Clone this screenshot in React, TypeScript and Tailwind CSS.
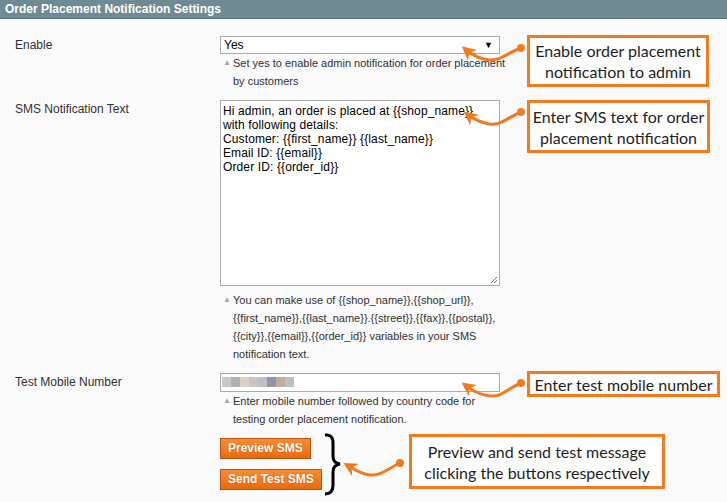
import React from "react";

const arial = { fontFamily: '"Liberation Sans", Arial, sans-serif' };

function Note({ lines }: { lines: React.ReactNode[] }) {
  return (
    <div className="flex text-[11px] leading-[18px] text-[#303030] whitespace-nowrap">
      <span className="w-[13px] shrink-0 pl-[3px] text-[8px] text-[#a0a8ae]">▲</span>
      <div>
        {lines.map((l, i) => (
          <div key={i}>{l}</div>
        ))}
      </div>
    </div>
  );
}

function Callout({ className, children }: { className: string; children: React.ReactNode }) {
  return (
    <div
      className={`absolute bg-white border-[3px] border-[#f27a1f] flex flex-col items-center justify-center text-center text-[#1e1e1e] text-[16px] leading-[21px] ${className}`}
      style={{ fontFamily: 'Lato, "Open Sans", sans-serif' }}
    >
      {children}
    </div>
  );
}

const btn =
  "h-[21px] px-[7px] border border-[#b95412] bg-gradient-to-b from-[#fb8c32] to-[#e9690a] text-white font-bold text-[12px] leading-[19px] [text-shadow:0_0_1px_#a04500]";

export default function App() {
  const blur = ["#c9c9cb", "#b7aeb0", "#d7d1ca", "#c6c6c9", "#c1bfbf", "#8d99a7", "#bdaea0", "#b8c0c8"];
  return (
    <div className="relative w-[727px] h-[502px] bg-[#fafafa] overflow-hidden" style={arial}>
      <div className="h-[19px] bg-[#6f8a93] border-b border-[#5f7780] pl-[5px] text-white font-bold text-[12px] leading-[19px]">
        Order Placement Notification Settings
      </div>
      <div className="pt-[17px]">
        {/* Row 1 */}
        <div className="flex">
          <div className="w-[220px] pl-[15px] pt-[1px] text-[12px] leading-[16px] text-[#303030]">Enable</div>
          <div className="w-[280px]">
            <div className="relative h-[18px] border border-[#aaaaaa] bg-white pl-[3px] text-[12px] leading-[16px] text-black">
              Yes
              <span className="absolute right-[6px] top-[0px] text-[9px] leading-[16px]">▼</span>
            </div>
            <Note lines={["Set yes to enable admin notification for order placement", "by customers"]} />
          </div>
        </div>
        {/* Row 2 */}
        <div className="flex mt-[10px]">
          <div className="w-[220px] pl-[15px] pt-[1px] text-[12px] leading-[16px] text-[#303030]">SMS Notification Text</div>
          <div className="w-[280px]">
            <div className="relative h-[186px] border border-[#aaaaaa] bg-white pl-[2px] pt-[3px] text-[12px] leading-[14px] tracking-[0.12px] text-black">
              <div>Hi admin, an order is placed at {"{{shop_name}}"}</div>
              <div>with following details:</div>
              <div>Customer: {"{{first_name}} {{last_name}}"}</div>
              <div>Email ID: {"{{email}}"}</div>
              <div>Order ID: {"{{order_id}}"}</div>
              <svg className="absolute right-[1px] bottom-[1px]" width="8" height="8" viewBox="0 0 8 8">
                <path d="M7 1 L1 7 M7 4 L4 7" stroke="#777" strokeWidth="1" />
              </svg>
            </div>
            <div className="mt-[5px]">
              <Note
                lines={[
                  "You can make use of {{shop_name}},{{shop_url}},",
                  "{{first_name}},{{last_name}}.{{street}},{{fax}},{{postal}},",
                  "{{city}},{{email}},{{order_id}} variables in your SMS",
                  "notification text.",
                ]}
              />
            </div>
          </div>
        </div>
        {/* Row 3 */}
        <div className="flex mt-[10px]">
          <div className="w-[220px] pl-[15px] pt-[1px] text-[12px] leading-[16px] text-[#303030]">Test Mobile Number</div>
          <div className="w-[280px]">
            <div className="h-[19px] border border-[#aaaaaa] bg-white pl-[1px] pt-[3px]">
              <div className="flex h-[10px]">
                {blur.map((c, i) => (
                  <div key={i} className="w-[9px] h-full" style={{ background: c }} />
                ))}
              </div>
            </div>
            <Note
              lines={["Enter mobile number followed by country code for", "testing order placement notification."]}
            />
            <div className="mt-[10px] flex flex-col items-start gap-[10px]">
              <button className={btn}>Preview SMS</button>
              <button className={btn}>Send Test SMS</button>
            </div>
          </div>
        </div>
      </div>

      {/* Annotations */}
      <Callout className="left-[527px] top-[35px] w-[182px] h-[52px]">
        <div>Enable order placement</div>
        <div>notification to admin</div>
      </Callout>
      <Callout className="left-[527px] top-[100px] w-[183px] h-[53px]">
        <div>Enter SMS text for order</div>
        <div>placement notification</div>
      </Callout>
      <Callout className="left-[527px] top-[371px] w-[193px] h-[26px]">
        <div>Enter test mobile number</div>
      </Callout>
      <Callout className="left-[409px] top-[434px] w-[256px] h-[55px]">
        <div>Preview and send test message</div>
        <div>clicking the buttons respectively</div>
      </Callout>

      <svg className="absolute left-0 top-0 pointer-events-none" width="727" height="502">
        <defs>
          <marker id="ah" viewBox="0 0 10 10" refX="7" refY="5" markerUnits="userSpaceOnUse" markerWidth="14" markerHeight="14" orient="auto">
            <path d="M0 0 L10 5 L0 10 L3 5 Z" fill="#f27a1f" />
          </marker>
        </defs>
        <g stroke="#f27a1f" strokeWidth="3" fill="none" strokeLinecap="round">
          <path d="M521 48 C507 53 500 61 489 60 C479 59 472 55 465 49" markerEnd="url(#ah)" />
          <path d="M521 112 C507 118 500 126 489 124 C479 122 472 118 467 114" markerEnd="url(#ah)" />
          <path d="M521 383 C507 389 502 397 490 396 C479 395 472 390 465 385" markerEnd="url(#ah)" />
          <path d="M400 463 C387 469 381 476 370 475 C360 474 354 469 347 465" markerEnd="url(#ah)" />
        </g>
        <g fill="#f27a1f">
          <circle cx="521" cy="48" r="4" />
          <circle cx="521" cy="112" r="4" />
          <circle cx="521" cy="383" r="4" />
          <circle cx="400" cy="463" r="4" />
        </g>
        <path
          d="M325 435 Q333 434 333 443 L333 456 Q333 463 340 464 Q333 465 333 472 L333 485 Q333 494 325 494"
          stroke="#000"
          strokeWidth="3"
          fill="none"
        />
      </svg>
    </div>
  );
}
